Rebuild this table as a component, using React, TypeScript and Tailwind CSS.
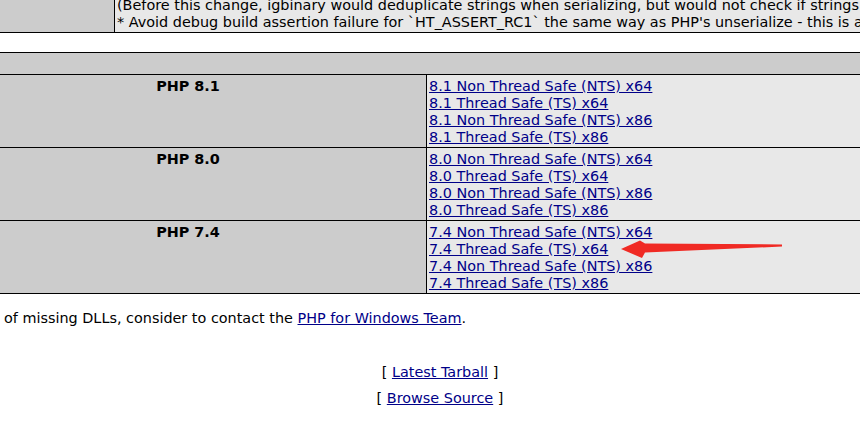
import React from "react";

const F = { fontFamily: '"DejaVu Sans", Verdana, sans-serif' };

function Row({ label, ver }: { label: string; ver: string }) {
  const links = [
    `${ver} Non Thread Safe (NTS) x64`,
    `${ver} Thread Safe (TS) x64`,
    `${ver} Non Thread Safe (NTS) x86`,
    `${ver} Thread Safe (TS) x86`,
  ];
  return (
    <div className="flex border-b border-black h-[73px]">
      <div className="w-[427px] shrink-0 bg-[#cccccc] border-r border-black pt-[3px] pr-[50px] text-center font-bold text-black">
        {label}
      </div>
      <div className="flex-1 bg-[#e8e8e8] pt-[3px] px-[2px] flex flex-col items-start">
        {links.map((l) => (
          <a key={l} href="#" className="text-[#000088] underline whitespace-nowrap">
            {l}
          </a>
        ))}
      </div>
    </div>
  );
}

export default function App() {
  return (
    <div
      className="w-[860px] h-[422px] overflow-hidden bg-white text-[14.4px] leading-[17px] text-black relative"
      style={F}
    >
      {/* top table fragment */}
      <div className="flex h-[33px] border-b border-black">
        <div className="w-[115px] shrink-0 bg-[#cccccc] border-r border-black" />
        <div className="flex-1 bg-[#e8e8e8] flex flex-col justify-end pl-[2px] pb-[1px] whitespace-nowrap overflow-hidden">
          <div>(Before this change, igbinary would deduplicate strings when serializing, but would not check if strings were</div>
          <div>* Avoid debug build assertion failure for `HT_ASSERT_RC1` the same way as PHP's unserialize - this is a</div>
        </div>
      </div>

      <div className="h-[19px]" />

      {/* downloads table */}
      <div className="border-t border-black">
        <div className="h-[22px] bg-[#cccccc] border-b border-black" />
        <Row label="PHP 8.1" ver="8.1" />
        <Row label="PHP 8.0" ver="8.0" />
        <Row label="PHP 7.4" ver="7.4" />
      </div>

      <p className="pl-[4px] mt-[16px] whitespace-nowrap">
        of missing DLLs, consider to contact the{" "}
        <a href="#" className="text-[#000088] underline">
          PHP for Windows Team
        </a>
        .
      </p>

      <div className="w-[880px] mt-[37px] flex flex-col items-center gap-[9px]">
        <div>
          [ <a href="#" className="text-[#000088] underline">Latest Tarball</a> ]
        </div>
        <div>
          [ <a href="#" className="text-[#000088] underline">Browse Source</a> ]
        </div>
      </div>

      {/* red annotation arrow */}
      <svg
        className="absolute left-0 top-0 pointer-events-none"
        width="860"
        height="422"
        viewBox="0 0 860 422"
      >
        <polygon
          points="621,249 640,240.5 645,243.5 782,244.5 782,246.5 645,252.5 642,258"
          fill="#f02a24"
        />
      </svg>
    </div>
  );
}
